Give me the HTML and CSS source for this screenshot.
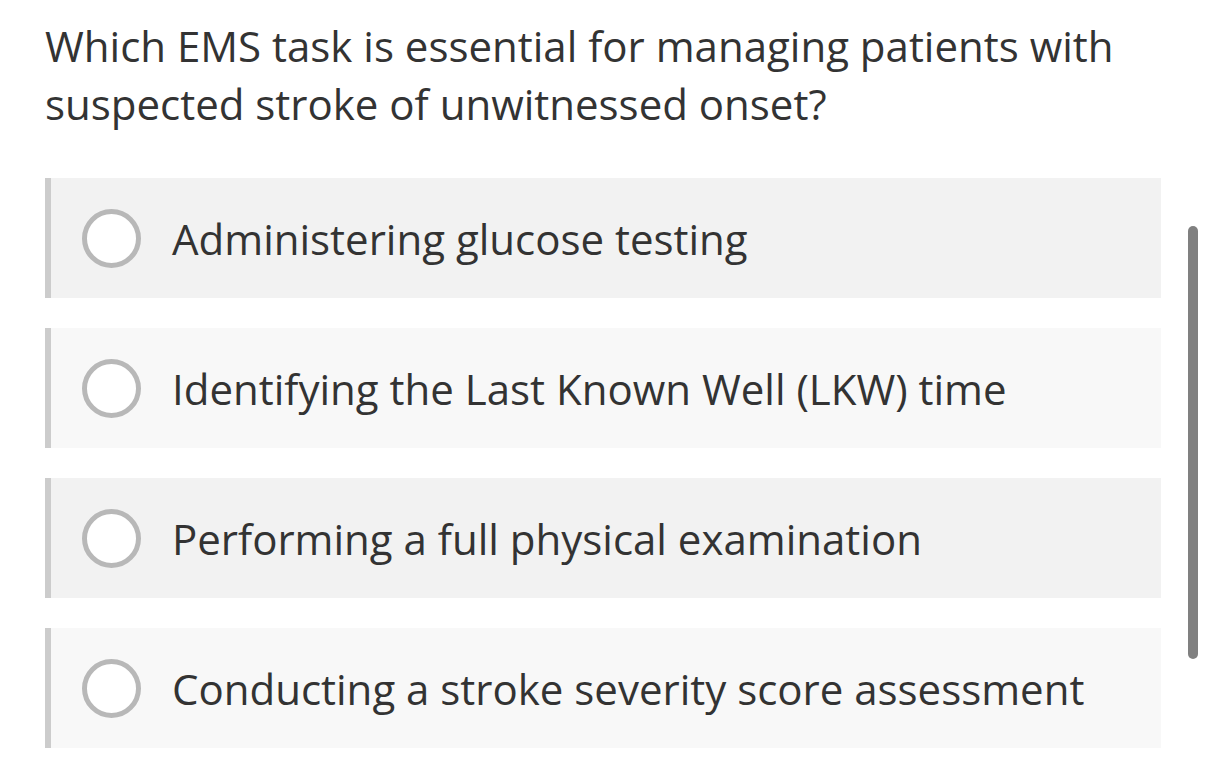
FILE: index.html
```html
<!DOCTYPE html>
<html>
<head>
<meta charset="utf-8">
<link rel="stylesheet" href="styles.css">
</head>
<body>
<div class="page">
  <div class="content">
    <h1 class="question">Which EMS task is essential for managing patients with suspected stroke of unwitnessed onset?</h1>
    <div class="options">
      <div class="option odd"><span class="radio"></span><span class="label">Administering glucose testing</span></div>
      <div class="option even"><span class="radio"></span><span class="label">Identifying the Last Known Well (LKW) time</span></div>
      <div class="option odd"><span class="radio"></span><span class="label">Performing a full physical examination</span></div>
      <div class="option even"><span class="radio"></span><span class="label">Conducting a stroke severity score assessment</span></div>
    </div>
  </div>
  <div class="scrollbar"><div class="thumb"></div></div>
</div>
</body>
</html>
```
FILE: styles.css
```css
* { box-sizing: border-box; }
html, body { margin: 0; padding: 0; background: #fff; }
body { font-family: "Open Sans", "Noto Sans", sans-serif; color: #333; }
.page { display: flex; width: 1206px; height: 773px; overflow: hidden; }
.content { width: 1161px; flex: none; padding-left: 45px; }
.question {
  margin: 0;
  padding-top: 17px;
  font-size: 42px;
  font-weight: 400;
  line-height: 58px;
  width: 1100px;
}
.options { display: flex; flex-direction: column; gap: 30px; margin-top: 45px; }
.option {
  height: 120px;
  display: flex;
  align-items: center;
  border-left: 6px solid #cccccc;
  padding-left: 31px;
}
.odd { background: #f2f2f2; }
.even { background: #f8f8f8; }
.radio {
  width: 59px; height: 59px;
  border-radius: 50%;
  border: 5px solid #b8b8b8;
  background: #fff;
  filter: blur(0.6px);
  flex: none;
}
.label { margin-left: 31px; font-size: 42px; }
.scrollbar { flex: 1; position: relative; }
.thumb {
  position: absolute; left: 27px; top: 226px;
  width: 10px; height: 433px;
  border-radius: 5px; background: #808080;
}
```
